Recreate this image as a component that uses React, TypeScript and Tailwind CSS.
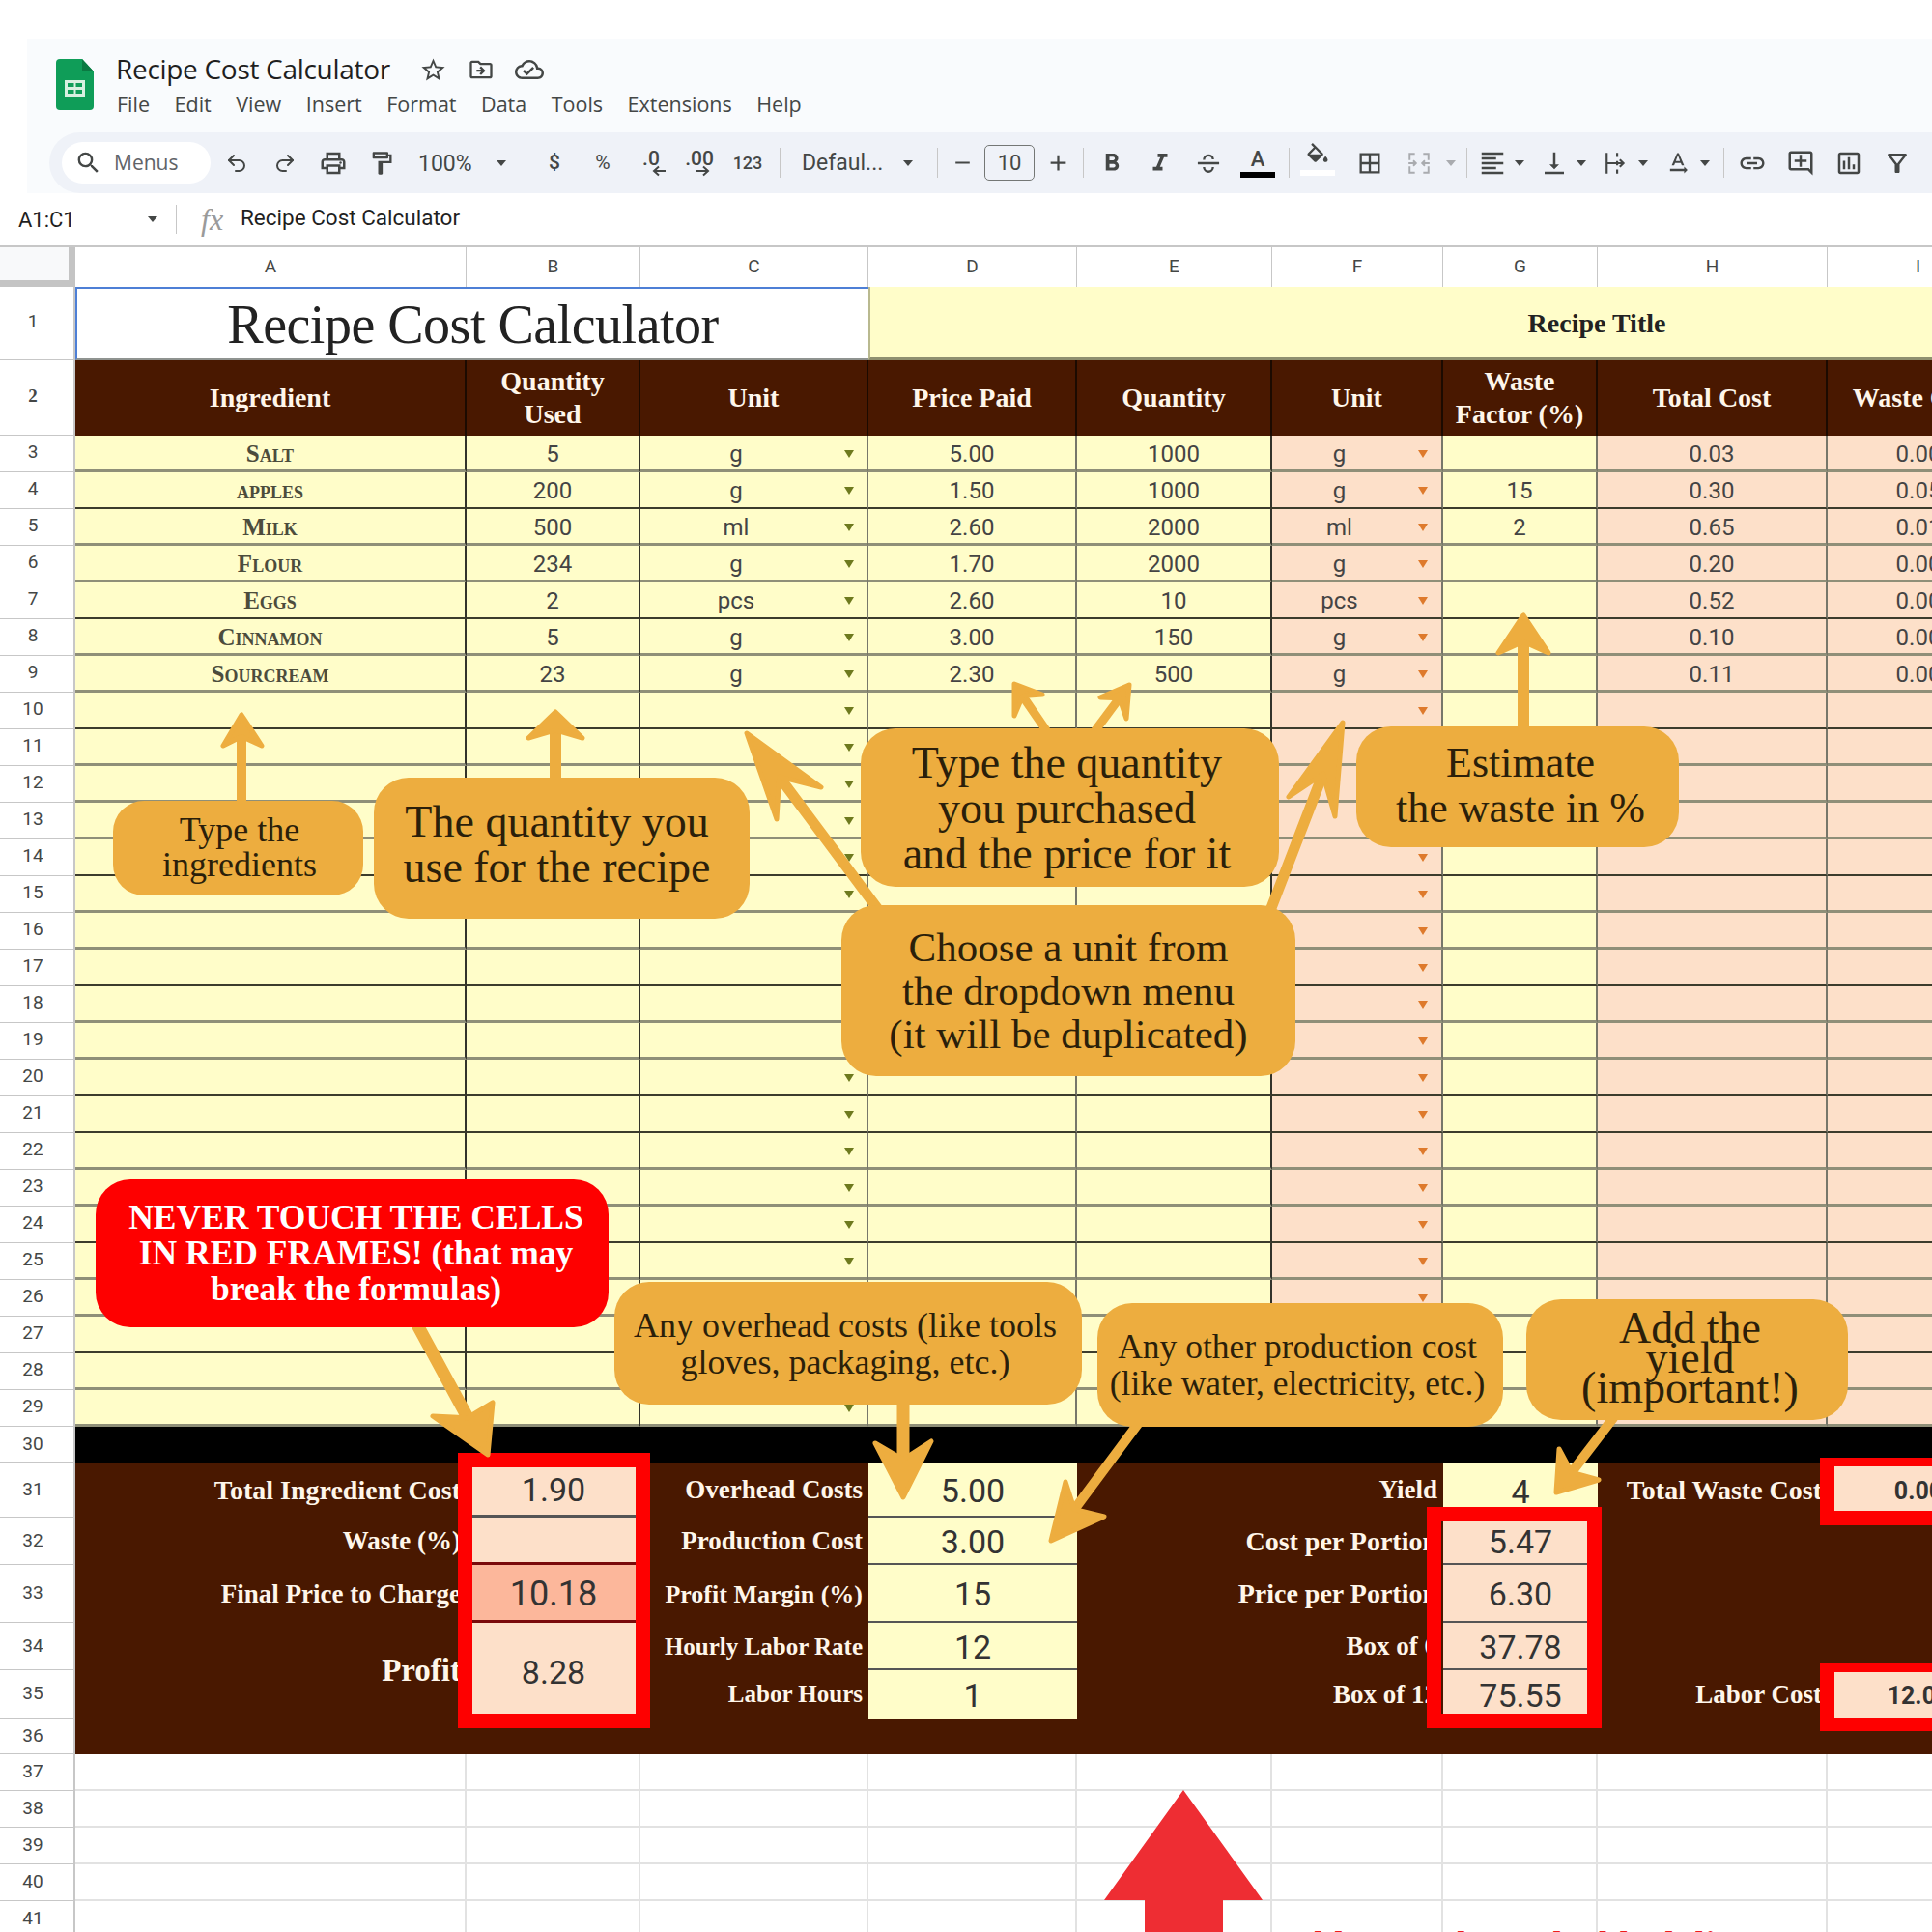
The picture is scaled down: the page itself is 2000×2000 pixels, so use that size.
import type { ReactNode } from 'react';
import { Undo2, Redo2 } from 'lucide-react';
import {
  MdSearch,
  MdOutlineStarBorder,
  MdOutlineDriveFileMove,
  MdOutlineCloudDone,
  MdOutlinePrint,
  MdOutlineFormatPaint,
  MdFormatBold,
  MdFormatItalic,
  MdBorderAll,
  MdFormatAlignLeft,
  MdVerticalAlignBottom,
  MdTextRotationNone,
  MdLink,
  MdOutlineAddComment,
  MdOutlineInsertChart,
  MdOutlineFilterAlt,
  MdAdd,
  MdRemove,
} from 'react-icons/md';

const COLS = 'grid grid-cols-[78px_405px_180px_236px_216px_202px_177px_160px_238px_188px] w-[2080px]';
const SERIF = "font-['Liberation_Serif',serif]";
const ICON = '#444746';
const ORANGE = '#edad3f';

const menus = ['File', 'Edit', 'View', 'Insert', 'Format', 'Data', 'Tools', 'Extensions', 'Help'];
const letters = ['A', 'B', 'C', 'D', 'E', 'F', 'G', 'H', 'I'];

const ingredients = [
  { name: 'Salt', qty: '5', unit: 'g', price: '5.00', bought: '1000', waste: '', total: '0.03', lost: '0.00' },
  { name: 'apples', qty: '200', unit: 'g', price: '1.50', bought: '1000', waste: '15', total: '0.30', lost: '0.05' },
  { name: 'Milk', qty: '500', unit: 'ml', price: '2.60', bought: '2000', waste: '2', total: '0.65', lost: '0.01' },
  { name: 'Flour', qty: '234', unit: 'g', price: '1.70', bought: '2000', waste: '', total: '0.20', lost: '0.00' },
  { name: 'Eggs', qty: '2', unit: 'pcs', price: '2.60', bought: '10', waste: '', total: '0.52', lost: '0.00' },
  { name: 'Cinnamon', qty: '5', unit: 'g', price: '3.00', bought: '150', waste: '', total: '0.10', lost: '0.00' },
  { name: 'Sourcream', qty: '23', unit: 'g', price: '2.30', bought: '500', waste: '', total: '0.11', lost: '0.00' },
];

const headers = ['Ingredient', 'Quantity\nUsed', 'Unit', 'Price Paid', 'Quantity', 'Unit', 'Waste\nFactor (%)', 'Total Cost', 'Waste Cost'];

// the screenshot was resampled, so some row lines came out darker than others
const darkLines = [4, 7, 10, 14, 17, 20, 21, 24, 27];

const Caret = () => (
  <span className="w-0 h-0 border-x-[5px] border-t-[6px] border-x-transparent border-t-[#444746] shrink-0" />
);

const Sep = () => <div className="w-px h-[31px] bg-[#c7c7c7] shrink-0" />;

const Tool = ({ w = 'w-[50px]', children }: { w?: string; children: ReactNode }) => (
  <div className={`${w} h-full flex items-center justify-center shrink-0`}>{children}</div>
);

const WithCaret = ({ children }: { children: ReactNode }) => (
  <div className="w-[64px] h-full flex items-center shrink-0">
    <div className="w-[44px] flex justify-center">{children}</div>
    <div className="w-[12px] flex justify-center">
      <Caret />
    </div>
  </div>
);

const SmallArrow = ({ flip = false }: { flip?: boolean }) => (
  <svg width="14" height="12" viewBox="0 0 14 12" fill="none" stroke={ICON} strokeWidth="2" className={flip ? 'rotate-180' : ''}>
    <path d="M14 6H3M7 1.500L2 6l5 4.500" />
  </svg>
);

const Logo = () => (
  <svg width="39" height="53" viewBox="0 0 39 53" className="shrink-0 mt-[6px]">
    <path d="M4 0H27L39 13V49a4 4 0 0 1-4 4H4a4 4 0 0 1-4-4V4a4 4 0 0 1 4-4z" fill="#0f9d58" />
    <path d="M27 0L39 13H27z" fill="#0a7a42" />
    <rect x="9" y="22" width="21" height="17" fill="#d8f0e0" />
    <rect x="12" y="25" width="6.500" height="4" fill="#0f9d58" />
    <rect x="20.500" y="25" width="6.500" height="4" fill="#0f9d58" />
    <rect x="12" y="32" width="6.500" height="4" fill="#0f9d58" />
    <rect x="20.500" y="32" width="6.500" height="4" fill="#0f9d58" />
  </svg>
);

const Header = () => (
  <div className="ml-[28px] h-[97px] bg-[#f9fbfd] flex pl-[30px] pt-[15px]">
    <Logo />
    <div className="ml-[23px]">
      <div className="flex items-center h-[34px]">
        <div className="w-[303px] text-[28px] text-[#1f1f1f] font-['Open_Sans',sans-serif] tracking-[-0.3px] -mt-[2px]">
          Recipe Cost Calculator
        </div>
        <div className="w-[50px] flex justify-center">
          <MdOutlineStarBorder size={29} color={ICON} />
        </div>
        <div className="w-[50px] flex justify-center">
          <MdOutlineDriveFileMove size={28} color={ICON} />
        </div>
        <div className="w-[50px] flex justify-center">
          <MdOutlineCloudDone size={30} color={ICON} />
        </div>
      </div>
      <div className="flex gap-[25.500px] ml-[1px] mt-[4px] text-[21.500px] leading-[30px] text-[#444746] font-['Open_Sans',sans-serif]">
        {menus.map((m) => (
          <span key={m}>{m}</span>
        ))}
      </div>
    </div>
  </div>
);

const Toolbar = () => (
  <div className="ml-[28px] pl-[23px] h-[63px] bg-[#f9fbfd]">
    <div className="h-full rounded-l-[32px] bg-[#eff2f8] pl-[13px] flex items-center text-[#444746] overflow-hidden">
      <div className="w-[154px] h-[43px] rounded-full bg-white flex items-center pl-[13px] gap-[12px] shrink-0">
        <MdSearch size={29} color={ICON} />
        <span className="text-[21px] text-[#5f6368] font-['Open_Sans',sans-serif]">Menus</span>
      </div>
      <div className="w-[2px] shrink-0" />
      <Tool><Undo2 size={24} strokeWidth={2} color={ICON} /></Tool>
      <Tool><Redo2 size={24} strokeWidth={2} color={ICON} /></Tool>
      <Tool><MdOutlinePrint size={30} color={ICON} /></Tool>
      <Tool><MdOutlineFormatPaint size={28} color={ICON} /></Tool>
      <div className="w-[124px] h-full flex items-center pl-[13px] shrink-0 text-[23px]">
        <span className="w-[81px] pt-[3px]">100%</span>
        <Caret />
      </div>
      <Sep />
      <div className="w-[4px] shrink-0" />
      <Tool><span className="text-[21px] font-medium">$</span></Tool>
      <Tool><span className="text-[21px]">%</span></Tool>
      <Tool>
        <span className="relative text-[21px] font-medium -mt-[8px]">
          .0
          <span className="absolute left-[10px] top-[22px] flex"><SmallArrow /></span>
        </span>
      </Tool>
      <Tool>
        <span className="relative text-[21px] font-medium -mt-[8px]">
          .00
          <span className="absolute left-[12px] top-[22px] flex"><SmallArrow flip /></span>
        </span>
      </Tool>
      <Tool><span className="text-[18px] font-medium">123</span></Tool>
      <div className="w-[8px] shrink-0" />
      <Sep />
      <div className="w-[162px] h-full flex items-center pl-[22px] shrink-0 text-[23px]">
        <span className="w-[105px] pt-[2px]">Defaul...</span>
        <Caret />
      </div>
      <Sep />
      <Tool><MdRemove size={25} color={ICON} /></Tool>
      <div className="w-[52px] h-[37px] rounded-[5px] border-[1.5px] border-[#747775] flex items-center justify-center text-[22px] ml-[-2px] shrink-0">
        10
      </div>
      <Tool w="w-[48px]"><MdAdd size={27} color={ICON} /></Tool>
      <div className="w-[2px] shrink-0" />
      <Sep />
      <div className="w-[4px] shrink-0" />
      <Tool><MdFormatBold size={30} color={ICON} /></Tool>
      <Tool><MdFormatItalic size={30} color={ICON} /></Tool>
      <Tool>
        <svg width="28" height="28" viewBox="0 0 24 24" fill="none" stroke={ICON} strokeWidth="2">
          <path d="M2.500 12h19M8 9c0-2.500 2-4 4-4s4 1.500 4 3.500M8 15.500c0 2.500 2 4 4 4s4-1.500 4-4" />
        </svg>
      </Tool>
      <Tool>
        <div className="flex flex-col items-center ml-[2px]">
          <span className="text-[22px] leading-[24px] font-medium">A</span>
          <span className="w-[36px] h-[6px] mt-[1px] bg-black" />
        </div>
      </Tool>
      <div className="w-[8px] shrink-0" />
      <Sep />
      <div className="w-[4px] shrink-0" />
      <Tool>
        <div className="flex flex-col items-center">
          <svg width="28" height="28" viewBox="0 0 24 24" fill={ICON} className="-mt-[8px]">
            <path d="M16.560 8.940L7.620 0 6.210 1.410l2.380 2.380-5.150 5.150c-.59.59-.59 1.540 0 2.120l5.500 5.500c.29.29.68.44 1.060.44s.77-.15 1.060-.44l5.500-5.500c.59-.58.59-1.530 0-2.120zM5.210 10L10 5.210 14.790 10H5.210zM19 11.500s-2 2.170-2 3.500c0 1.100.9 2 2 2s2-.9 2-2c0-1.330-2-3.500-2-3.500z" />
          </svg>
          <span className="w-[36px] h-[6px] bg-white" />
        </div>
      </Tool>
      <div className="w-[4px] shrink-0" />
      <Tool><MdBorderAll size={28} color={ICON} /></Tool>
      <div className="w-px shrink-0" />
      <Tool>
        <svg width="26" height="26" viewBox="0 0 24 24" fill="none" stroke="#a9abaf" strokeWidth="1.800">
          <path d="M3 9V3h5M3 15v6h5M21 9V3h-5M21 15v6h-5M2 12h7M6.500 9.500L9 12l-2.500 2.500M22 12h-7M17.500 9.500L15 12l2.500 2.500" />
        </svg>
      </Tool>
      <div className="w-[16px] flex justify-center shrink-0">
        <span className="w-0 h-0 border-x-[5px] border-t-[6px] border-x-transparent border-t-[#a9abaf]" />
      </div>
      <div className="w-[8px] shrink-0" />
      <Sep />
      <div className="w-[4px] shrink-0" />
      <WithCaret><MdFormatAlignLeft size={30} color={ICON} /></WithCaret>
      <WithCaret><MdVerticalAlignBottom size={30} color={ICON} /></WithCaret>
      <WithCaret>
        <svg width="26" height="26" viewBox="0 0 24 24" fill="none" stroke={ICON} strokeWidth="2">
          <path d="M3 2v20M13 2v4M13 10v4M13 18v4M3 12h16M15.500 8.500L19 12l-3.500 3.500" />
        </svg>
      </WithCaret>
      <WithCaret><MdTextRotationNone size={28} color={ICON} /></WithCaret>
      <div className="w-[5px] shrink-0" />
      <Sep />
      <div className="w-[4px] shrink-0" />
      <Tool><MdLink size={30} color={ICON} /></Tool>
      <Tool><MdOutlineAddComment size={30} color={ICON} /></Tool>
      <Tool><MdOutlineInsertChart size={30} color={ICON} /></Tool>
      <Tool><MdOutlineFilterAlt size={30} color={ICON} /></Tool>
    </div>
  </div>
);

const FormulaBar = () => (
  <div className="h-[54px] flex items-center bg-white">
    <span className="w-[153px] pl-[19px] text-[22px] text-[#1f1f1f]">A1:C1</span>
    <Caret />
    <div className="w-px h-[30px] bg-[#c7c7c7] ml-[19px]" />
    <span className={`${SERIF} italic text-[32px] text-[#9a9a9a] ml-[25px] w-[41px]`}>fx</span>
    <span className="text-[22.500px] text-[#1f1f1f] -mt-[2px]">Recipe Cost Calculator</span>
  </div>
);

const ColumnHeaders = () => (
  <div className={`${COLS} h-[43px] border-t-2 border-[#c7c7c7] text-[19px] text-[#444746] bg-white`}>
    <div className="border-r-[7px] border-b-[7px] border-[#c4c4c4] bg-[#f8f9fa]" />
    {letters.map((l) => (
      <div key={l} className="flex items-center justify-center border-r border-[#c7c7c7]">
        {l}
      </div>
    ))}
  </div>
);

const RowNum = ({ n, pad = 'pb-[3px]' }: { n: number; pad?: string }) => (
  <div className={`flex items-center justify-center ${pad} pr-[8px] text-[19px] text-[#444746] bg-white border-b border-r-2 border-[#c7c7c7]`}>
    {n}
  </div>
);

const Cell = ({ className = '', children }: { className?: string; children?: ReactNode }) => (
  <div className={`relative flex items-center justify-center overflow-hidden pt-[2px] ${className}`}>{children}</div>
);

const SheetRow = ({ n, row }: { n: number; row?: (typeof ingredients)[number] }) => {
  const line = darkLines.includes(n) ? 'border-b-2 border-b-[#3c3c2c]' : 'border-b-[3px] border-b-[#8f8f78]';
  const dark = 'border-r-2 border-r-[#33332a]';
  const soft = 'border-r-2 border-r-[#77776a]';
  const yellow = `bg-[#fffdc9] ${line}`;
  const peach = `bg-[#fde0c9] ${line}`;
  return (
    <div className={`${COLS} h-[38px] text-[24px] text-[#444444]`}>
      <RowNum n={n} />
      <Cell className={`${yellow} ${dark} ${SERIF} [font-variant-caps:small-caps] font-bold text-[25px] text-[#4c4c3c]`}>{row?.name}</Cell>
      <Cell className={`${yellow} ${dark}`}>{row?.qty}</Cell>
      <Cell className={`${yellow} ${soft}`}>
        <span className="mr-[36px]">{row?.unit}</span>
        <span className="right-[13px] absolute top-1/2 -mt-[3px] w-0 h-0 border-x-[5px] border-t-[8px] border-x-transparent border-t-[#6e7a1e]" />
      </Cell>
      <Cell className={`${yellow} ${soft}`}>{row?.price}</Cell>
      <Cell className={`${yellow} ${dark}`}>{row?.bought}</Cell>
      <Cell className={`${peach} ${soft}`}>
        <span className="mr-[36px]">{row?.unit}</span>
        <span className="right-[14px] absolute top-1/2 -mt-[3px] w-0 h-0 border-x-[5px] border-t-[8px] border-x-transparent border-t-[#de7a2c]" />
      </Cell>
      <Cell className={`${yellow} ${soft}`}>{row?.waste}</Cell>
      <Cell className={`${peach} ${soft}`}>{row?.total}</Cell>
      <Cell className={peach}>{row?.lost}</Cell>
    </div>
  );
};

const TitleRows = () => (
  <>
    <div className={`${COLS} h-[76px]`}>
      <RowNum n={1} />
      <div className={`col-span-3 h-[76px] flex items-center justify-center pt-[2px] bg-white border-t-2 border-l-2 border-[#4d7fd6] border-b-2 border-b-[#8f9390] ${SERIF} text-[56px] leading-none text-[#222222] tracking-[-0.5px]`}>
        Recipe Cost Calculator
      </div>
      <div className="col-span-6 h-[76px] bg-[#fffdc9] border-b-[3px] border-b-[#8f9070] border-l-2 border-l-[#b9b98f]">
        <div className={`w-[1504px] h-full flex items-center justify-center pt-[3px] ${SERIF} font-bold text-[28px] text-[#222222]`}>
          Recipe Title
        </div>
      </div>
    </div>
    <div className={`${COLS} h-[78px] bg-[#491800] text-[#fff6ea] ${SERIF} font-bold text-[28px] leading-[34px] text-center`}>
      <RowNum n={2} />
      {headers.map((h, i) => (
        <div key={i} className="flex items-center justify-center whitespace-pre-line border-r-2 border-[#1c0a00]">
          {h}
        </div>
      ))}
    </div>
  </>
);

const Label = ({ className = 'text-[27px]', children }: { className?: string; children?: ReactNode }) => (
  <div className={`flex items-center justify-end pr-[6px] whitespace-nowrap ${SERIF} font-bold text-[#fff6ea] ${className}`}>
    {children}
  </div>
);

const Value = ({ className = 'text-[34px]', children }: { className?: string; children?: ReactNode }) => (
  <div className={`flex items-center justify-center pt-[3px] text-[#333333] ${className}`}>{children}</div>
);

const Totals = () => (
  <div className={`${COLS} grid-rows-[37px_57px_49px_60px_49px_50px_37px] bg-[#491800]`}>
    <RowNum n={30} pad="pb-0" />
    <div className="col-span-9 bg-black" />

    <RowNum n={31} pad="pb-0" />
    <Label className="text-[28px]">Total Ingredient Cost</Label>
    <Value className="text-[34px] bg-[#fde0c9] border-b-[3px] border-[#555555]">1.90</Value>
    <Label>Overhead Costs</Label>
    <Value className="text-[34px] bg-[#fffdc9] border-b-2 border-[#555555]">5.00</Value>
    <div />
    <Label>Yield</Label>
    <Value className="text-[34px] bg-[#fffdc9]">4</Value>
    <Label className="text-[28px]">Total Waste Cost</Label>
    <Value className="bg-[#fde0c9] text-[25px] font-bold">0.00</Value>

    <RowNum n={32} pad="pb-0" />
    <Label>Waste (%)</Label>
    <Value className="text-[34px] bg-[#fde0c9] border-b-[3px] border-[#7a0a0a]" />
    <Label>Production Cost</Label>
    <Value className="text-[34px] bg-[#fffdc9] border-b-2 border-[#555555]">3.00</Value>
    <div />
    <Label className="text-[28px]">Cost per Portion</Label>
    <Value className="text-[34px] bg-[#fde0c9] border-b-2 border-[#555555]">5.47</Value>
    <div />
    <div />

    <RowNum n={33} pad="pb-0" />
    <Label>Final Price to Charge</Label>
    <Value className="bg-[#fcb79b] border-b-[3px] border-[#7a0a0a] text-[36px]">10.18</Value>
    <Label className="text-[26px]">Profit Margin (%)</Label>
    <Value className="text-[34px] bg-[#fffdc9] border-b-2 border-[#555555]">15</Value>
    <div />
    <Label className="text-[28px]">Price per Portion</Label>
    <Value className="text-[34px] bg-[#fde0c9] border-b-2 border-[#555555]">6.30</Value>
    <div />
    <div />

    <RowNum n={34} pad="pb-0" />
    <Label className="row-span-2 text-[33px]">Profit</Label>
    <Value className="text-[34px] row-span-2 bg-[#fde0c9]">8.28</Value>
    <Label className="text-[25px]">Hourly Labor Rate</Label>
    <Value className="text-[34px] bg-[#fffdc9] border-b-2 border-[#555555]">12</Value>
    <div />
    <Label>Box of 6</Label>
    <Value className="text-[34px] bg-[#fde0c9] border-b-2 border-[#555555]">37.78</Value>
    <div />
    <div />

    <RowNum n={35} pad="pb-0" />
    <Label className="text-[25px]">Labor Hours</Label>
    <Value className="text-[34px] bg-[#fffdc9]">1</Value>
    <div />
    <Label>Box of 12</Label>
    <Value className="text-[34px] bg-[#fde0c9]">75.55</Value>
    <Label>Labor Cost</Label>
    <Value className="bg-[#fde0c9] text-[25px] font-bold">12.00</Value>

    <RowNum n={36} pad="pb-0" />
    <div className="col-span-9" />
  </div>
);

const EmptyRow = ({ n }: { n: number }) => (
  <div className={`${COLS} h-[38px] bg-white`}>
    <RowNum n={n} pad="pb-0" />
    {letters.map((l) => (
      <div key={l} className="border-r-2 border-b-2 border-[#e2e2e2]" />
    ))}
  </div>
);

const Frame = ({ className }: { className: string }) => (
  <div className={`absolute border-[#fe0000] ${className}`} />
);

const Callout = ({ className, children }: { className: string; children: ReactNode }) => (
  <div className={`absolute flex flex-col items-center justify-center text-center whitespace-nowrap ${SERIF} ${className}`}>
    {children}
  </div>
);

type P = [number, number];

const Arrow = ({ from, tip, b1, b2, w = 10, notch = 0.7 }: { from: P; tip: P; b1: P; b2: P; w?: number; notch?: number }) => {
  const dx = from[0] - tip[0];
  const dy = from[1] - tip[1];
  const len = Math.hypot(dx, dy);
  const ux = dx / len;
  const uy = dy / len;
  const head = (b1[0] - tip[0]) * ux + (b1[1] - tip[1]) * uy;
  const nx = tip[0] + ux * head * notch;
  const ny = tip[1] + uy * head * notch;
  return (
    <g stroke={ORANGE} fill={ORANGE} strokeLinejoin="round" strokeLinecap="round">
      <line x1={from[0]} y1={from[1]} x2={nx} y2={ny} strokeWidth={w} />
      <path d={`M${tip[0]} ${tip[1]}L${b1[0]} ${b1[1]}L${nx} ${ny}L${b2[0]} ${b2[1]}Z`} strokeWidth={5} />
    </g>
  );
};

const Arrows = () => (
  <svg className="absolute left-0 top-0" width="2000" height="2000" viewBox="0 0 2000 2000">
    <Arrow from={[250, 832]} tip={[250, 740]} b1={[231, 772]} b2={[271, 772]} w={10} />
    <Arrow from={[575, 808]} tip={[575, 737]} b1={[547, 764]} b2={[603, 764]} w={12} />
    <Arrow from={[908, 940]} tip={[773, 759]} b1={[850, 815]} b2={[804, 848]} w={11} notch={0.62} />
    <Arrow from={[1316, 940]} tip={[1390, 748]} b1={[1334, 825]} b2={[1382, 845]} w={11} notch={0.62} />
    <Arrow from={[1083, 756]} tip={[1050, 708]} b1={[1079, 719]} b2={[1050, 741]} w={9} notch={0.6} />
    <Arrow from={[1134, 756]} tip={[1169, 709]} b1={[1139, 722]} b2={[1166, 744]} w={9} notch={0.6} />
    <Arrow from={[1577, 756]} tip={[1577, 637]} b1={[1551, 676]} b2={[1603, 676]} w={12} />
    <Arrow from={[429, 1366]} tip={[505, 1506]} b1={[448, 1466]} b2={[510, 1452]} w={13} />
    <Arrow from={[935, 1450]} tip={[935, 1550]} b1={[906, 1494]} b2={[964, 1492]} w={13} />
    <Arrow from={[1178, 1474]} tip={[1088, 1595]} b1={[1103, 1534]} b2={[1143, 1570]} w={10} />
    <Arrow from={[1670, 1468]} tip={[1611, 1545]} b1={[1614, 1500]} b2={[1655, 1532]} w={10} />
    <path d="M1225 1853L1307 1967H1266V2000H1185V1967H1143Z" fill="#ee2d33" />
  </svg>
);

export default function App() {
  return (
    <div className="relative w-[2000px] h-[2000px] overflow-hidden bg-white font-['Roboto',sans-serif]">
      <div className="h-[40px]" />
      <Header />
      <Toolbar />
      <FormulaBar />
      <ColumnHeaders />
      <TitleRows />
      {Array.from({ length: 27 }, (_, i) => (
        <SheetRow key={i} n={i + 3} row={ingredients[i]} />
      ))}
      <Totals />
      {[37, 38, 39, 40, 41].map((n) => (
        <EmptyRow key={n} n={n} />
      ))}

      <Frame className="left-[474px] top-[1504px] w-[199px] h-[285px] border-[15px]" />
      <Frame className="left-[1477px] top-[1560px] w-[181px] h-[229px] border-[15px]" />
      <Frame className="left-[1884px] top-[1509px] w-[200px] h-[70px] border-t-[9px] border-l-[15px] border-b-[15px]" />
      <Frame className="left-[1884px] top-[1722px] w-[200px] h-[70px] border-t-[9px] border-l-[15px] border-b-[14px]" />

      <Arrows />

      <Callout className="left-[117px] top-[829px] w-[259px] h-[98px] rounded-[32px] bg-[#edad3f] text-[#2b1f0a] text-[36px] leading-[36px] pl-[3px] pb-[3px]">
        <span>Type the</span>
        <span>ingredients</span>
      </Callout>
      <Callout className="left-[387px] top-[805px] w-[389px] h-[146px] rounded-[36px] bg-[#edad3f] text-[#2b1f0a] text-[46px] leading-[47px] pb-[9px] pr-[10px]">
        <span>The quantity you</span>
        <span>use for the recipe</span>
      </Callout>
      <Callout className="left-[891px] top-[754px] w-[433px] h-[164px] rounded-[36px] bg-[#edad3f] text-[#2b1f0a] text-[46px] leading-[47px] pr-[6px]">
        <span>Type the quantity</span>
        <span>you purchased</span>
        <span>and the price for it</span>
      </Callout>
      <Callout className="left-[871px] top-[937px] w-[470px] h-[177px] rounded-[36px] bg-[#edad3f] text-[#2b1f0a] text-[43px] leading-[45px]">
        <span>Choose a unit from</span>
        <span>the dropdown menu</span>
        <span>(it will be duplicated)</span>
      </Callout>
      <Callout className="left-[1404px] top-[752px] w-[334px] h-[125px] rounded-[36px] bg-[#edad3f] text-[#2b1f0a] text-[44px] leading-[47px] pl-[6px] pb-[3px]">
        <span>Estimate</span>
        <span>the waste in %</span>
      </Callout>
      <Callout className="left-[99px] top-[1221px] w-[531px] h-[153px] rounded-[36px] bg-[#fe0000] text-white font-bold text-[35.500px] leading-[37px] pl-[8px]">
        <span>NEVER TOUCH THE CELLS</span>
        <span>IN RED FRAMES! (that may</span>
        <span>break the formulas)</span>
      </Callout>
      <Callout className="left-[636px] top-[1327px] w-[484px] h-[127px] rounded-[36px] bg-[#edad3f] text-[#2b1f0a] text-[36px] leading-[38px] pr-[6px]">
        <span>Any overhead costs (like tools</span>
        <span>gloves, packaging, etc.)</span>
      </Callout>
      <Callout className="left-[1136px] top-[1349px] w-[420px] h-[128px] rounded-[36px] bg-[#edad3f] text-[#2b1f0a] text-[35.500px] leading-[38px] pr-[6px]">
        <span>Any other production cost</span>
        <span>(like water, electricity, etc.)</span>
      </Callout>
      <Callout className="left-[1580px] top-[1345px] w-[333px] h-[125px] rounded-[36px] bg-[#edad3f] text-[#2b1f0a] text-[46px] leading-[31px] pl-[6px] pb-[5px]">
        <span>Add the</span>
        <span>yield</span>
        <span>(important!)</span>
      </Callout>

      <div className={`absolute left-[1323px] top-[1994px] whitespace-nowrap text-[#ee1c1c] font-bold text-[36px] leading-none tracking-[1px] ${SERIF}`}>
        Add rows above the black line
      </div>
    </div>
  );
}
